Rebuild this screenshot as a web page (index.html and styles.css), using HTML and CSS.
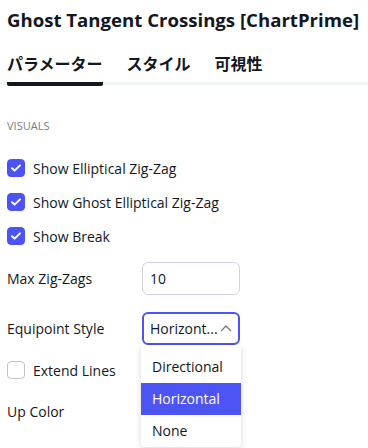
FILE: index.html
```html
<!DOCTYPE html>
<html lang="ja">
<head>
    <meta charset="UTF-8">
    <meta name="viewport" content="width=device-width, initial-scale=1.0">
    <title>Ghost Tangent Crossings [ChartPrime]</title>
    <link rel="stylesheet" href="styles.css">
</head>
<body>

<div class="dialog">
    <h2 class="title">Ghost Tangent Crossings [ChartPrime]</h2>

    <div class="tabs">
        <div class="tab active">パラメーター</div>
        <div class="tab">スタイル</div>
        <div class="tab">可視性</div>
    </div>

    <div class="content">
        <div class="section-title">VISUALS</div>

        <label class="check-row">
            <span class="checkbox checked">
                <svg width="12" height="10" viewBox="0 0 12 10"><path d="M2 5.2l2.6 2.4L10 2.4" fill="none" stroke="#fff" stroke-width="2" stroke-linecap="round" stroke-linejoin="round"/></svg>
            </span>
            Show Elliptical Zig-Zag
        </label>
        <label class="check-row">
            <span class="checkbox checked">
                <svg width="12" height="10" viewBox="0 0 12 10"><path d="M2 5.2l2.6 2.4L10 2.4" fill="none" stroke="#fff" stroke-width="2" stroke-linecap="round" stroke-linejoin="round"/></svg>
            </span>
            Show Ghost Elliptical Zig-Zag
        </label>
        <label class="check-row">
            <span class="checkbox checked">
                <svg width="12" height="10" viewBox="0 0 12 10"><path d="M2 5.2l2.6 2.4L10 2.4" fill="none" stroke="#fff" stroke-width="2" stroke-linecap="round" stroke-linejoin="round"/></svg>
            </span>
            Show Break
        </label>

        <div class="field-row">
            <div class="field-label">Max Zig-Zags</div>
            <div class="input">10</div>
        </div>

        <div class="field-row">
            <div class="field-label">Equipoint Style</div>
            <div class="select-wrap">
                <div class="select">
                    <span>Horizont...</span>
                    <svg width="12" height="8" viewBox="0 0 12 8"><path d="M1.5 6.5L6 2l4.5 4.5" fill="none" stroke="#787b86" stroke-width="1.4" stroke-linecap="round"/></svg>
                </div>
                <div class="menu">
                    <div class="menu-item">Directional</div>
                    <div class="menu-item selected">Horizontal</div>
                    <div class="menu-item">None</div>
                </div>
            </div>
        </div>

        <label class="check-row">
            <span class="checkbox"></span>
            Extend Lines
        </label>

        <div class="field-row color-row">
            <div class="field-label">Up Color</div>
        </div>
    </div>
</div>

</body>
</html>
```

FILE: styles.css
```css
body {
    font-family: "Open Sans", "Noto Sans", sans-serif;
    background-color: #ffffff;
    color: #131722;
    margin: 0;
    overflow: hidden;
}

.dialog {
    width: 368px;
    height: 448px;
    overflow: hidden;
}

.title {
    margin: 0;
    padding: 8px 0 0 7px;
    font-size: 18.6px;
    line-height: 24px;
    font-weight: 700;
    white-space: nowrap;
}

.tabs {
    display: flex;
    gap: 24px;
    margin-top: 19px;
    padding-left: 7px;
    border-bottom: 3px solid #f0f3fa;
    height: 31px;
    align-items: flex-start;
}

.tab {
    font-family: "Noto Sans CJK JP", sans-serif;
    font-size: 16px;
    font-weight: 700;
    line-height: 24px;
    height: 35px;
    box-sizing: border-box;
}

.tab.active {
    border-bottom: 4px solid #131722;
    border-radius: 2px;
}

.content {
    padding: 0 7px;
}

.section-title {
    font-size: 11px;
    color: #787b86;
    margin-top: 33px;
    line-height: 16px;
    margin-bottom: 17px;
}

.check-row {
    display: flex;
    align-items: center;
    gap: 8px;
    font-size: 14px;
    height: 34px;
}

.checkbox {
    width: 18px;
    height: 18px;
    box-sizing: border-box;
    border: 1px solid #c1c4cd;
    border-radius: 4px;
    display: flex;
    align-items: center;
    justify-content: center;
}

.checkbox.checked {
    background-color: #4c54f5;
    border-color: #4c54f5;
}

.field-row {
    display: flex;
    align-items: center;
    height: 50px;
    font-size: 14px;
}

.field-label {
    width: 135px;
}

.input,
.select {
    width: 98px;
    height: 33px;
    box-sizing: border-box;
    border: 1px solid #d1d4dc;
    border-radius: 6px;
    padding: 0 7px;
    display: flex;
    align-items: center;
}

.select-wrap {
    position: relative;
}

.select {
    border: 2px solid #4c54f5;
    padding: 0 6px;
    justify-content: space-between;
}

.menu {
    position: absolute;
    top: 33px;
    left: -1px;
    width: 100px;
    background: #fff;
    padding-top: 6px;
    border-radius: 4px;
    box-shadow: 0 2px 6px rgba(0, 0, 0, 0.15);
    z-index: 2;
}

.menu-item {
    height: 32px;
    line-height: 32px;
    padding-left: 11px;
}

.menu-item.selected {
    background-color: #4c54f5;
    color: #fff;
}

.color-row {
    height: 48px;
}
```
